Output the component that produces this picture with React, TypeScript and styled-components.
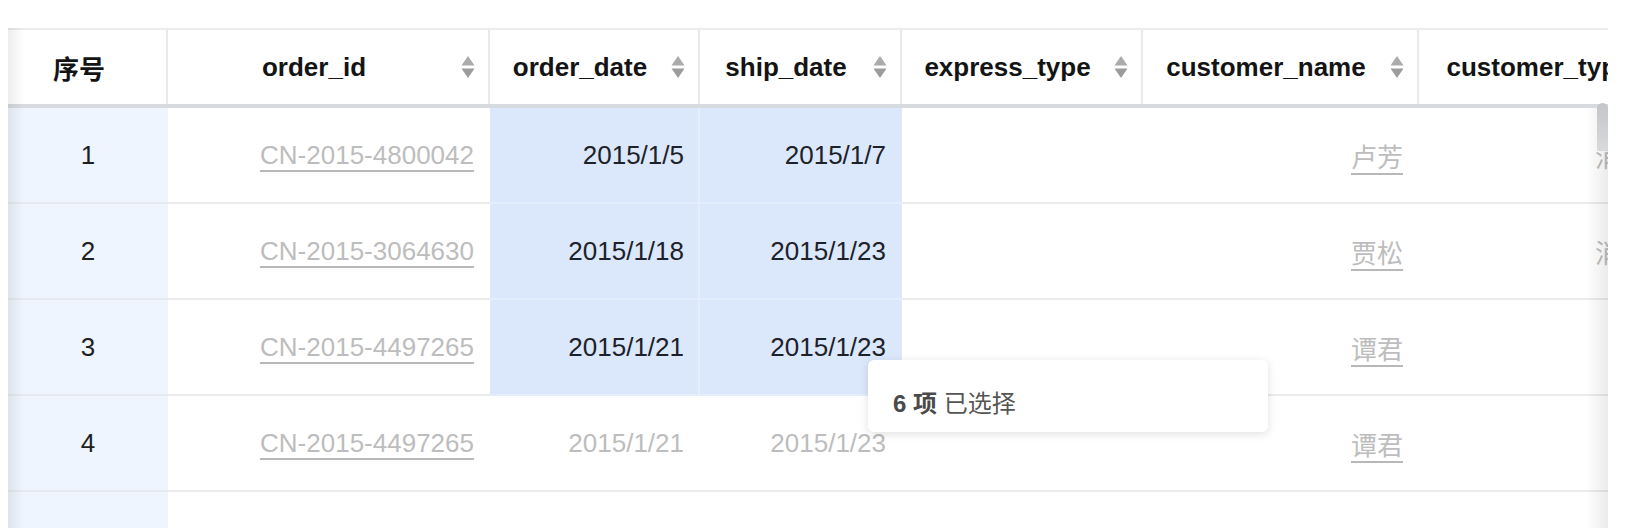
import React from 'react';
import styled, { createGlobalStyle, css } from 'styled-components';

const GlobalStyle = createGlobalStyle`
  html, body {
    margin: 0;
    padding: 0;
    background: #fff;
  }
  body {
    font-family: "Liberation Sans", "Noto Sans CJK SC", Arial, sans-serif;
    -webkit-font-smoothing: antialiased;
  }
`;

const COLUMNS = '160px 322px 210px 202px 241px 276px 270px';

const TableWrap = styled.div`
  position: relative;
  margin: 28px 0 0 8px;
  width: 1600px;
  height: 500px;
  overflow: hidden;
`;

const HeaderRow = styled.div`
  display: grid;
  grid-template-columns: ${COLUMNS};
  height: 80px;
  box-sizing: border-box;
  border-top: 2px solid #ececee;
  border-bottom: 4px solid #d7dadf;
  background: #fff;
`;

const HeadCell = styled.div<{ $plain?: boolean }>`
  display: flex;
  align-items: center;
  gap: 13px;
  padding: ${(p) => (p.$plain ? '0 28px 0 12px' : '0 13px 0 12px')};
  border-right: 2px solid #e8e9ec;
  font-size: 26px;
  font-weight: 700;
  color: #141414;
  white-space: nowrap;
  min-width: 0;
`;

const HeadLabel = styled.span`
  flex: 1;
  text-align: center;
`;

const Sorter = styled.svg`
  flex: none;
  width: 14px;
  height: 24px;
`;

const Row = styled.div`
  display: grid;
  grid-template-columns: ${COLUMNS};
  height: 96px;
`;

type Tone = 'dark' | 'muted';

const Cell = styled.div<{ $align?: 'center' | 'right'; $tone?: Tone; $selected?: boolean; $divider?: boolean }>`
  display: flex;
  align-items: center;
  justify-content: ${(p) => (p.$align === 'center' ? 'center' : 'flex-end')};
  padding: 0 16px;
  box-sizing: border-box;
  border-bottom: 2px solid #ebebed;
  font-size: 26px;
  white-space: nowrap;
  color: ${(p) => (p.$tone === 'muted' ? '#bdbdbd' : '#1d2129')};
  ${(p) =>
    p.$selected &&
    css`
      background: #dbe8fb;
      border-bottom-color: #e4edfb;
    `}
  ${(p) =>
    p.$divider &&
    css`
      box-shadow: inset -2px 0 0 #e6eefb;
    `}
`;

const IndexCell = styled(Cell)`
  background: #eef5fe;
  border-bottom-color: #e5eaf1;
  color: #1f1f1f;
`;

const LinkText = styled.span`
  color: #bdbdbd;
  text-decoration: underline;
  text-decoration-color: #b8b8b8;
  text-decoration-thickness: 2px;
  text-underline-offset: 6px;
`;

const LeftShade = styled.div`
  position: absolute;
  left: 0;
  top: 0;
  bottom: 0;
  width: 16px;
  background: linear-gradient(to right, rgba(0, 0, 0, 0.07), rgba(0, 0, 0, 0));
  pointer-events: none;
`;

const RightShade = styled.div`
  position: absolute;
  right: 0;
  top: 80px;
  bottom: 0;
  width: 22px;
  background: linear-gradient(to left, rgba(0, 0, 0, 0.08), rgba(0, 0, 0, 0));
  pointer-events: none;
`;

const ScrollThumb = styled.div`
  position: absolute;
  right: 0;
  top: 75px;
  width: 11px;
  height: 48px;
  border-radius: 6px 6px 2px 2px;
  background: linear-gradient(to bottom, #c4c5c8, #d9dadc);
`;

const SelectionTip = styled.div`
  position: absolute;
  left: 860px;
  top: 332px;
  width: 400px;
  height: 72px;
  box-sizing: border-box;
  padding: 26px 25px 0;
  background: #fff;
  border-radius: 6px;
  box-shadow: 0 2px 10px rgba(0, 0, 0, 0.13);
  font-size: 24px;
  line-height: 36px;
  color: #555;
  white-space: nowrap;

  b {
    font-weight: 700;
    color: #4a4a4a;
  }
`;

const SortIcon = () => (
  <Sorter viewBox="0 0 14 24">
    <path d="M7 1 L13.5 10.5 H0.5 Z" fill="#ababab" />
    <path d="M0.5 13.5 H13.5 L7 23 Z" fill="#9c9c9c" />
  </Sorter>
);

const columns = ['order_id', 'order_date', 'ship_date', 'express_type', 'customer_name', 'customer_type'];

type Order = {
  no: number;
  id: string;
  orderDate: string;
  shipDate: string;
  name: string;
  type: string;
  selected: boolean;
};

const orders: Order[] = [
  { no: 1, id: 'CN-2015-4800042', orderDate: '2015/1/5', shipDate: '2015/1/7', name: '卢芳', type: '消费者', selected: true },
  { no: 2, id: 'CN-2015-3064630', orderDate: '2015/1/18', shipDate: '2015/1/23', name: '贾松', type: '消费者', selected: true },
  { no: 3, id: 'CN-2015-4497265', orderDate: '2015/1/21', shipDate: '2015/1/23', name: '谭君', type: '公司', selected: true },
  { no: 4, id: 'CN-2015-4497265', orderDate: '2015/1/21', shipDate: '2015/1/23', name: '谭君', type: '公司', selected: false },
];

const App: React.FC = () => {
  return (
    <>
      <GlobalStyle />
      <TableWrap>
        <HeaderRow>
          <HeadCell $plain>
            <HeadLabel>序号</HeadLabel>
          </HeadCell>
          {columns.map((c) => (
            <HeadCell key={c}>
              <HeadLabel>{c}</HeadLabel>
              <SortIcon />
            </HeadCell>
          ))}
        </HeaderRow>

        {orders.map((o) => {
          const tone: Tone = o.selected ? 'dark' : 'muted';
          return (
            <Row key={o.no}>
              <IndexCell $align="center">{o.no}</IndexCell>
              <Cell>
                <LinkText>{o.id}</LinkText>
              </Cell>
              <Cell $tone={tone} $selected={o.selected} $divider={o.selected}>
                {o.orderDate}
              </Cell>
              <Cell $tone={tone} $selected={o.selected}>
                {o.shipDate}
              </Cell>
              <Cell />
              <Cell>
                <LinkText>{o.name}</LinkText>
              </Cell>
              <Cell $tone="muted">{o.type}</Cell>
            </Row>
          );
        })}

        <Row>
          <IndexCell $align="center" />
          <Cell />
          <Cell />
          <Cell />
          <Cell />
          <Cell />
          <Cell />
        </Row>

        <LeftShade />
        <RightShade />
        <ScrollThumb />

        <SelectionTip>
          <b>6 项</b> 已选择
        </SelectionTip>
      </TableWrap>
    </>
  );
};

export default App;
